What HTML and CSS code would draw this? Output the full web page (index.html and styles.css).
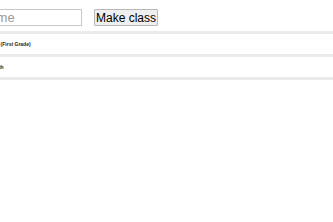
FILE: index.html
```html
<!DOCTYPE html>
<html lang="en">
<head>
  <meta charset="UTF-8" />
  <title>Classes</title>
  <link rel="stylesheet" href="styles.css">
</head>
<body>
  <div class="page">
    <form class="new-class">
      <input type="text" class="class-name" placeholder="Class name">
      <button type="button" class="make-btn">Make class</button>
    </form>

    <ul class="class-list">
      <li>Art (First Grade)</li>
      <li>Math</li>
    </ul>
  </div>
</body>
</html>
```

FILE: styles.css
```css
body {
  margin: 0;
  font-family: "Liberation Sans", Arial, sans-serif;
  background: white;
  overflow: hidden;
}

.page {
  margin-left: -57px;
  width: 400px;
}

.new-class {
  display: flex;
  align-items: center;
  gap: 12px;
  padding-top: 9px;
  margin: 0;
}

.class-name {
  width: 139px;
  height: 17px;
  box-sizing: border-box;
  padding: 0 2px;
  border: 1px solid #c8c8c8;
  font-family: inherit;
  font-size: 13px;
  outline: none;
}

.class-name::placeholder {
  color: #9a9a9a;
}

.make-btn {
  height: 17px;
  box-sizing: border-box;
  padding: 0 1px;
  border: 1px solid #b8b8b8;
  border-radius: 1px;
  background: #efefef;
  font-family: inherit;
  font-size: 12px;
  color: black;
}

.class-list {
  list-style: none;
  margin: 5px 0 0;
  padding: 0;
}

.class-list li {
  border-top: 3px solid #ebebeb;
  height: 20px;
  line-height: 20px;
  padding-left: 49px;
  font-size: 5px;
  font-weight: bold;
  color: #222;
}

.class-list li:last-child {
  border-bottom: 3px solid #ebebeb;
}
```
